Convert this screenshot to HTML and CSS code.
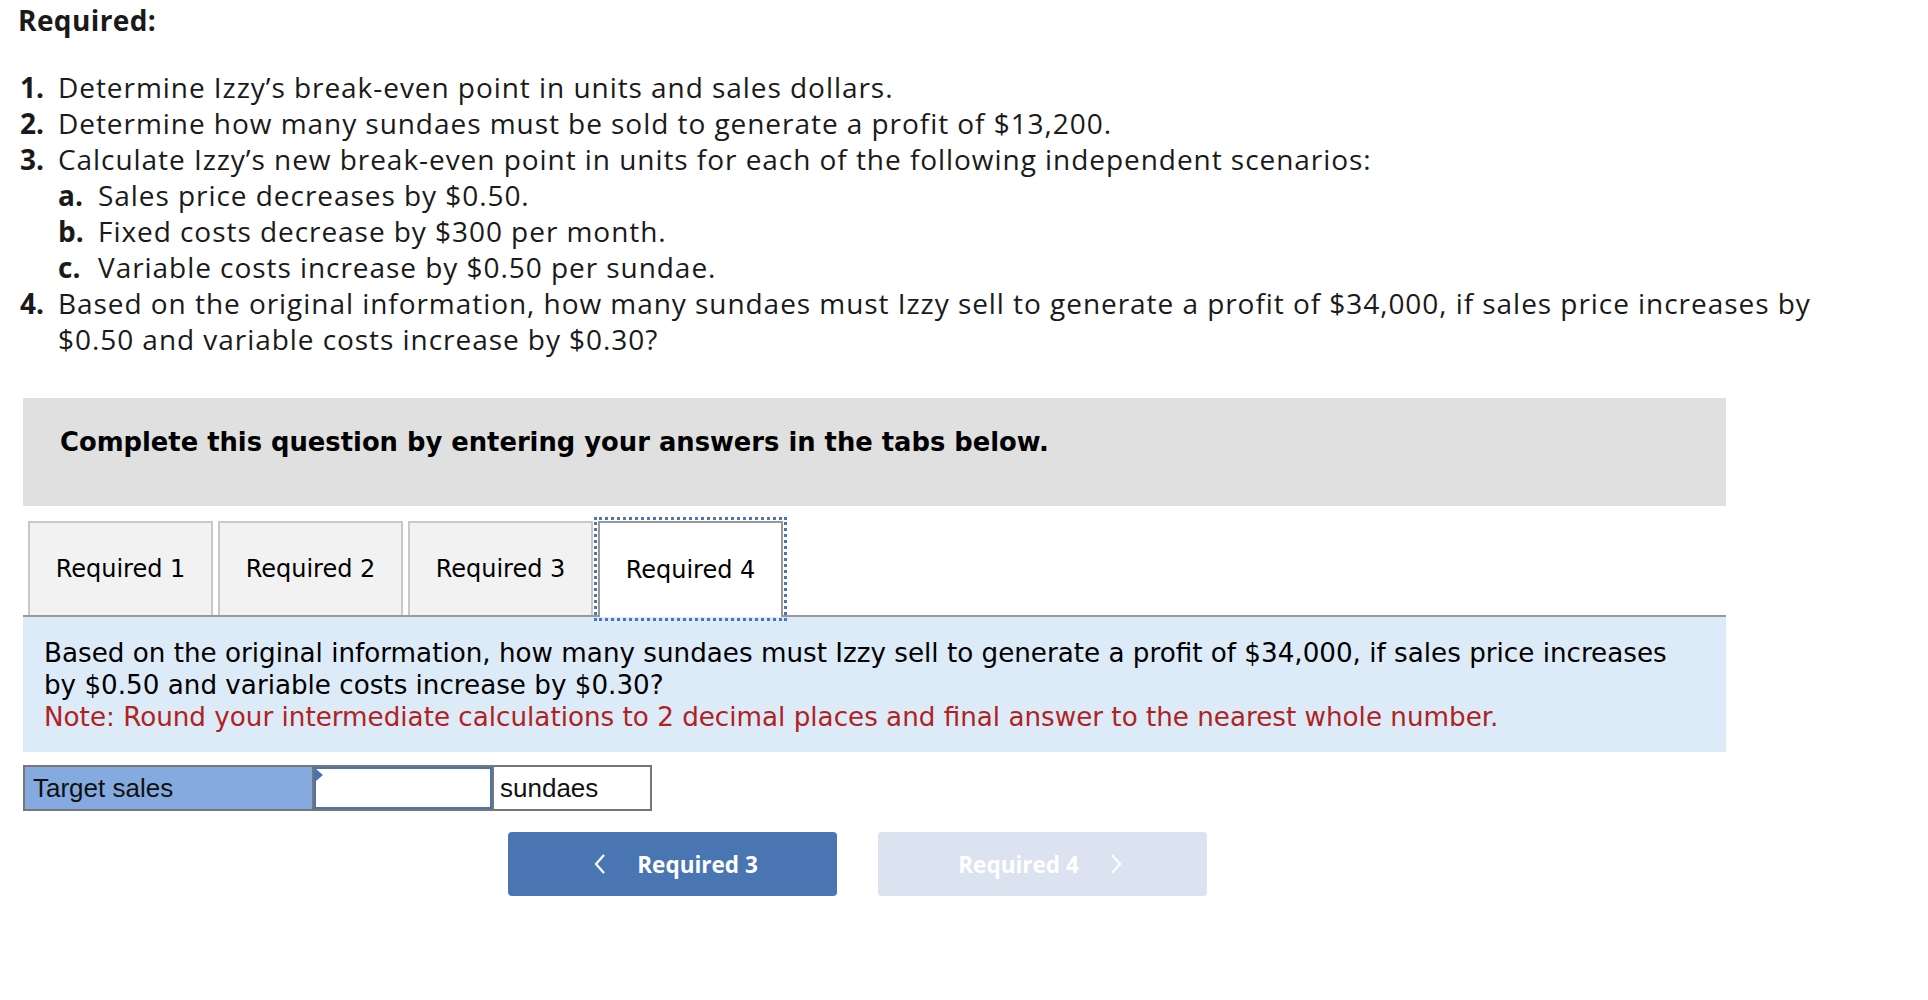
FILE: index.html
```html
<!DOCTYPE html>
<html>
<head>
<meta charset="utf-8">
<link rel="stylesheet" href="styles.css">
</head>
<body>
<div class="page">
  <div class="intro">
    <div class="req-title">Required:</div>
    <div class="list">
      <div class="item"><span class="num">1.</span><span class="txt">Determine Izzy’s break-even point in units and sales dollars.</span></div>
      <div class="item"><span class="num">2.</span><span class="txt">Determine how many sundaes must be sold to generate a profit of $13,200.</span></div>
      <div class="item"><span class="num">3.</span><span class="txt">Calculate Izzy’s new break-even point in units for each of the following independent scenarios:</span></div>
      <div class="sub"><span class="let">a.</span><span class="txt">Sales price decreases by $0.50.</span></div>
      <div class="sub"><span class="let">b.</span><span class="txt">Fixed costs decrease by $300 per month.</span></div>
      <div class="sub"><span class="let">c.</span><span class="txt">Variable costs increase by $0.50 per sundae.</span></div>
      <div class="item"><span class="num">4.</span><span class="txt">Based on the original information, how many sundaes must Izzy sell to generate a profit of $34,000, if sales price increases by $0.50 and variable costs increase by $0.30?</span></div>
    </div>
  </div>

  <div class="work">
    <div class="banner">Complete this question by entering your answers in the tabs below.</div>

    <div class="tabs">
      <div class="tab">Required 1</div>
      <div class="tab">Required 2</div>
      <div class="tab">Required 3</div>
      <div class="tab active">Required 4</div>
    </div>

    <div class="panel">
      <div class="q">Based on the original information, how many sundaes must Izzy sell to generate a profit of $34,000, if sales price increases by $0.50 and variable costs increase by $0.30?</div>
      <div class="note">Note: Round your intermediate calculations to 2 decimal places and final answer to the nearest whole number.</div>
    </div>

    <div class="answer">
      <div class="label">Target sales</div>
      <div class="field"><span class="flag"></span></div>
      <div class="unit">sundaes</div>
    </div>

    <div class="nav">
      <div class="btn prev"><span class="chev">
        <svg width="14" height="22" viewBox="0 0 14 22"><path d="M11 2 L3 11 L11 20" fill="none" stroke="#fff" stroke-width="2.2"/></svg>
      </span><span>Required 3</span></div>
      <div class="btn next"><span>Required 4</span><span class="chev">
        <svg width="14" height="22" viewBox="0 0 14 22"><path d="M3 2 L11 11 L3 20" fill="none" stroke="#fff" stroke-width="2.2"/></svg>
      </span></div>
    </div>
  </div>
</div>
</body>
</html>
```

FILE: styles.css
```css
html, body {
  margin: 0;
  padding: 0;
  background: #fff;
}
.page {
  width: 1928px;
}
.intro {
  font-family: "Open Sans", "Liberation Sans", sans-serif;
  font-size: 28px;
  letter-spacing: 0.95px;
  line-height: 36px;
  color: #1a1a1a;
  padding-top: 2px;
}
.req-title {
  font-weight: 700;
  padding-left: 18px;
  letter-spacing: 0.4px;
}
.list {
  margin-top: 31px;
}
.item, .sub {
  display: grid;
  grid-template-columns: 44px 1fr;
  column-gap: 14px;
  padding-right: 60px;
}
.sub {
  grid-template-columns: 84px 1fr;
}
.num {
  font-weight: 700;
  text-align: right;
  letter-spacing: 0;
}
.let {
  font-weight: 700;
  padding-left: 58px;
  letter-spacing: 0;
}
.work {
  margin-top: 41px;
  width: 1703px;
  margin-left: 23px;
}
.banner {
  background: #e0e0e0;
  font-family: Verdana, "DejaVu Sans", sans-serif;
  font-weight: 700;
  font-size: 25.8px;
  line-height: 28px;
  color: #000;
  padding: 30px 37px 50px;
}
.tabs {
  display: flex;
  gap: 5px;
  margin-top: 15px;
  padding-left: 5px;
  border-bottom: 2px solid #999;
  height: 94px;
}
.tab {
  width: 185px;
  box-sizing: border-box;
  height: 94px;
  background: #f2f2f2;
  border: 2px solid #c8c8c8;
  border-bottom: none;
  font-family: Verdana, "DejaVu Sans", sans-serif;
  font-size: 24px;
  color: #000;
  display: flex;
  align-items: center;
  justify-content: center;
}
.tab.active {
  background: #fff;
  border: 2px solid #999;
  border-bottom: none;
  height: 96px;
  outline: 3px dotted #4a76b8;
  outline-offset: 1px;
  position: relative;
  z-index: 1;
}
.panel {
  background: #ddeaf7;
  font-family: Verdana, "DejaVu Sans", sans-serif;
  font-size: 26.2px;
  line-height: 32px;
  color: #000;
  padding: 20px 30px 19px 21px;
}
.note {
  color: #b02222;
}
.answer {
  display: flex;
  margin-top: 13px;
  width: 629px;
  height: 46px;
  box-sizing: border-box;
  border: 2px solid #777;
  font-family: "Liberation Sans", Arial, sans-serif;
  font-size: 26px;
  color: #111;
}
.label {
  width: 289px;
  background: #84aadf;
  border-right: 2px solid #777;
  display: flex;
  align-items: center;
  padding-left: 8px;
  box-sizing: border-box;
}
.field {
  width: 178px;
  box-sizing: border-box;
  border: 2px solid #4a72b2;
  background: #fff;
  position: relative;
}
.flag {
  position: absolute;
  left: 0;
  top: 0;
  width: 0;
  height: 0;
  border-top: 6px solid transparent;
  border-bottom: 6px solid transparent;
  border-left: 7px solid #4a72b2;
}
.unit {
  flex: 1;
  border-left: 2px solid #777;
  display: flex;
  align-items: center;
  padding-left: 6px;
}
.nav {
  display: flex;
  gap: 41px;
  margin-top: 21px;
  padding-left: 485px;
}
.btn {
  width: 329px;
  height: 64px;
  border-radius: 4px;
  display: flex;
  align-items: center;
  justify-content: center;
  gap: 30px;
  font-family: "Open Sans", "Liberation Sans", sans-serif;
  font-weight: 700;
  font-size: 22.5px;
  color: #fff;
}
.btn.prev {
  background: #4a75b3;
  padding-left: 6px;
  box-sizing: border-box;
}
.btn.next {
  background: #dae3ef;
  box-sizing: border-box;
  padding-right: 4px;
}
.chev {
  display: flex;
  align-items: center;
}
```
